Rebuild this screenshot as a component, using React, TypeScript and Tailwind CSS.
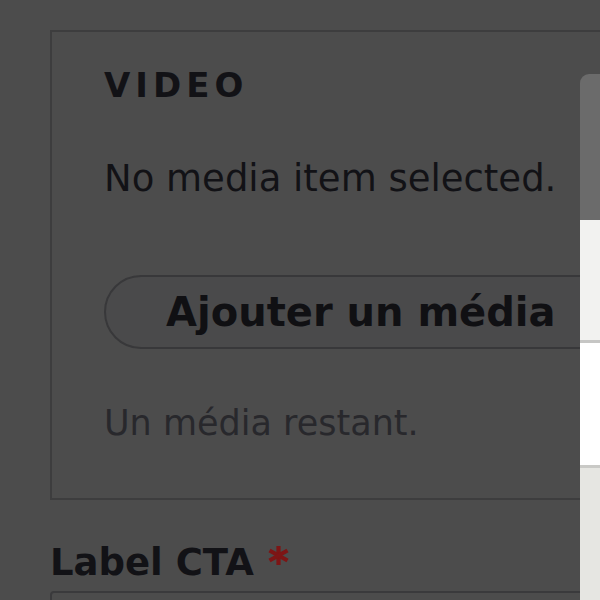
const font = { fontFamily: '"DejaVu Sans", Verdana, sans-serif' };

function Asterisk() {
	return (
		<svg width="21" height="19" viewBox="0 0 21 19" aria-hidden="true" className="ml-[14px] mb-[16px] shrink-0">
			<g stroke="#7d1515" strokeWidth="4.2" strokeLinecap="butt">
				<line x1="10.5" y1="0" x2="10.5" y2="19" />
				<line x1="1.5" y1="4.5" x2="19.5" y2="14.5" />
				<line x1="1.5" y1="14.5" x2="19.5" y2="4.5" />
			</g>
		</svg>
	);
}

function MediaFieldset() {
	return (
		<div className="flex w-[700px] flex-col border-2 border-[#3d3d3e] pb-[55px] pl-[52px] pt-[33px]">
			<div className="h-[40px] text-[34px] font-bold uppercase leading-[40px] tracking-[5px] text-[#121216]">
				Video
			</div>
			<p className="mt-[52px] h-[44px] text-[37px] leading-[44px] text-[#121216]">
				No media item selected.
			</p>
			<button
				type="button"
				className="mt-[74px] flex h-[74px] w-[560px] items-center rounded-full border-2 border-[#38383a] bg-[#4a4a4b] pl-[60px] text-left text-[40px] font-bold leading-[70px] text-[#101013]"
			>
				Ajouter un média
			</button>
			<p className="mt-[54px] h-[40px] text-[35px] leading-[40px] text-[#28282c]">
				Un média restant.
			</p>
		</div>
	);
}

function DialogEdge() {
	return (
		<div className="absolute left-[580px] top-[74px] flex h-[560px] w-[120px] flex-col overflow-hidden rounded-tl-[9px]">
			<div className="h-[146px] shrink-0 bg-[#6b6b6b]" />
			<div className="h-[123px] shrink-0 border-b-[3px] border-[#c6c6c4] bg-[#f2f2f0]" />
			<div className="h-[125px] shrink-0 border-b-[3px] border-[#c9c9c6] bg-white" />
			<div className="flex-1 bg-[#e6e6e2]" />
		</div>
	);
}

export default function App() {
	return (
		<div style={font} className="relative h-[600px] w-[600px] overflow-hidden bg-[#4c4c4c]">
			<div className="flex flex-col pl-[50px] pt-[30px]">
				<MediaFieldset />
				<div className="mt-[42px] flex h-[42px] items-center">
					<span className="text-[37px] font-bold leading-[42px] text-[#121216]">Label CTA</span>
					<Asterisk />
				</div>
				<div className="mt-[7px] h-[80px] w-[700px] rounded-tl-[4px] border-2 border-[#3a3a3c] bg-[#4c4c4c]" />
			</div>
			<DialogEdge />
		</div>
	);
}
